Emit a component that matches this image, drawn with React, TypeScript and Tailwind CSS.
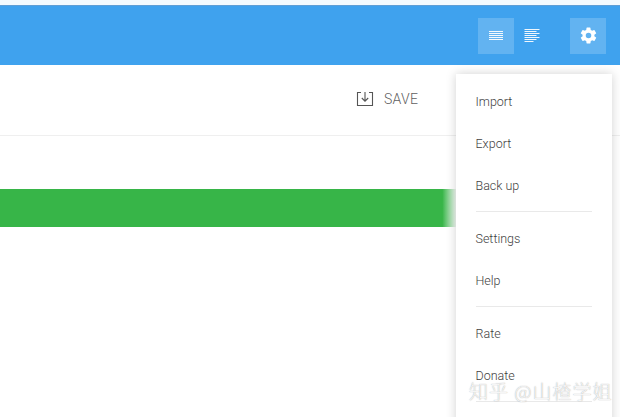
import React from "react";

const Lines = ({ uneven }: { uneven?: boolean }) => (
  <svg width="16" height="14" viewBox="0 0 16 14" fill="none" stroke="#ffffff" strokeWidth="1" opacity="0.92">
    {(uneven ? [15, 12, 15, 12, 15, 12, 9] : [14, 14, 14, 14, 14]).map((w, i) => (
      <path key={i} d={`M${uneven ? 0.5 : 1} ${(uneven ? 0.5 : 2.5) + i * 2}h${w}`} />
    ))}
  </svg>
);

function Item({ label }: { label: string }) {
  return <div className="flex h-[42px] items-center pl-[19.5px] text-[12.5px] font-light text-[#3f3f3f]">{label}</div>;
}

const Divider = () => <div className="mx-5 mb-[6px] mt-[4px] h-px bg-[#e9e9e9]" />;

export default function App() {
  return (
    <div className="relative h-[417px] w-[620px] overflow-hidden bg-white font-['Roboto','Liberation_Sans',sans-serif]">
      <div className="h-[5px] bg-[#f4fbff]" />
      <header className="flex h-[60px] items-center border-t border-[#5f9fd6] bg-[#3fa2ee] pl-[478px]">
        <div className="flex h-9 w-9 items-center justify-center bg-[#62b3f1]">
          <Lines />
        </div>
        <div className="flex h-9 w-9 items-center justify-center">
          <Lines uneven />
        </div>
        <div className="ml-5 flex h-9 w-9 items-center justify-center bg-[#62b3f1]">
          <svg width="19" height="19" viewBox="0 0 24 24" fill="#ffffff" className="ml-[1px]">
            <path d="M19.4 13c.04-.33.06-.66.06-1s-.02-.67-.07-1l2.11-1.65a.5.5 0 0 0 .12-.64l-2-3.46a.5.5 0 0 0-.61-.22l-2.49 1a7.3 7.3 0 0 0-1.69-.98l-.38-2.65A.49.49 0 0 0 14 2h-4a.49.49 0 0 0-.49.42l-.38 2.65c-.61.25-1.17.58-1.69.98l-2.49-1a.49.49 0 0 0-.61.22l-2 3.46a.49.49 0 0 0 .12.64L4.57 11c-.04.33-.07.67-.07 1s.03.67.07 1l-2.11 1.65a.5.5 0 0 0-.12.64l2 3.46c.12.22.39.3.61.22l2.49-1c.52.4 1.08.73 1.69.98l.38 2.65c.03.24.24.42.49.42h4c.25 0 .46-.18.49-.42l.38-2.65c.61-.25 1.17-.59 1.69-.98l2.49 1c.23.08.49 0 .61-.22l2-3.46a.5.5 0 0 0-.12-.64L19.4 13zM12 15.5a3.5 3.5 0 1 1 0-7 3.5 3.5 0 0 1 0 7z" />
          </svg>
        </div>
      </header>
      <div className="flex h-[71px] items-center border-b border-[#efefef] pb-[1px] pl-[356px]">
        <svg width="18" height="16" viewBox="0 0 18 16" fill="none" stroke="#555555" strokeWidth="1.1" className="mr-[10px] -translate-y-[1px]">
          <path d="M5 1.5H1.5v13h15v-13H13" />
          <path d="M9 1v9M5.8 7 9 10.2 12.2 7" />
        </svg>
        <span className="text-[14px] font-light tracking-[0.3px] text-[#5f5f5f]">SAVE</span>
      </div>
      <div className="mt-[53px] h-[38px] w-[456px] bg-[linear-gradient(to_right,#37b548_0,#37b548_97%,#f2f8f3_100%)]" />

      <aside className="absolute left-[456px] top-[74px] h-[360px] w-[156px] bg-white pt-[7px] shadow-[0_0_10px_rgba(0,0,0,0.18)]">
        <Item label="Import" />
        <Item label="Export" />
        <Item label="Back up" />
        <Divider />
        <Item label="Settings" />
        <Item label="Help" />
        <Divider />
        <Item label="Rate" />
        <Item label="Donate" />
        <Divider />
      </aside>

      <div className="absolute left-[469px] top-[379px] whitespace-nowrap font-['Noto_Sans_CJK_SC',sans-serif] text-[19px] font-light leading-[24px] tracking-[1px] text-white/90 [text-shadow:0_0_1px_rgba(70,70,70,0.6)]">
        知乎 @山楂学姐
      </div>
    </div>
  );
}
